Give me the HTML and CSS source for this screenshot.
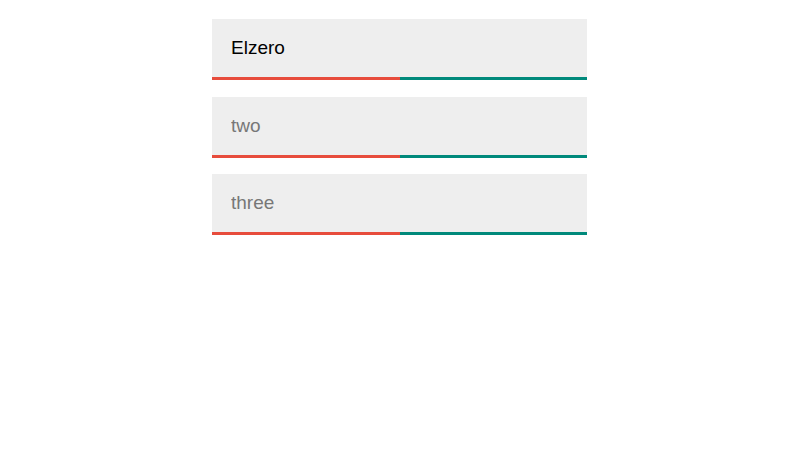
FILE: index.html
```html
<!DOCTYPE html>
<html>
<head>
<meta charset="utf-8">
<link rel="stylesheet" href="styles.css">
</head>
<body>
<form class="form">
  <input class="field" type="text" value="Elzero">
  <input class="field" type="text" placeholder="two">
  <input class="field" type="text" placeholder="three">
</form>
</body>
</html>
```
FILE: styles.css
```css
html, body {
  margin: 0;
  padding: 0;
  background: #fff;
}
.form {
  display: flex;
  flex-direction: column;
  gap: 16.5px;
  width: 375px;
  margin: 19px auto 0;
  position: relative;
  left: -0.5px;
}
.field {
  display: block;
  box-sizing: border-box;
  width: 375px;
  height: 61px;
  margin: 0;
  padding: 0 19px;
  border: none;
  border-bottom: 3px solid;
  border-image: linear-gradient(to right, #e74c3c 50%, #00897b 50%) 1;
  background: #eeeeee;
  font-family: "Liberation Sans", Arial, sans-serif;
  font-size: 19px;
  color: #000;
  outline: none;
}
.field::placeholder {
  color: #777;
}
```
